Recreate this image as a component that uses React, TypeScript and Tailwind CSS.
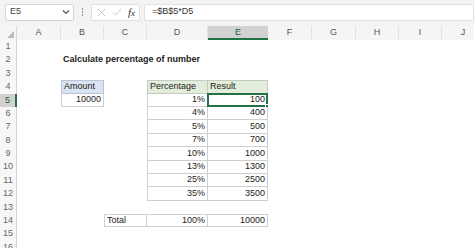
const cols = [
  { key: "A", w: "w-[44px]" },
  { key: "B", w: "w-[43px]" },
  { key: "C", w: "w-[43px]" },
  { key: "D", w: "w-[61px]" },
  { key: "E", w: "w-[60px]" },
  { key: "F", w: "w-[44px]" },
  { key: "G", w: "w-[44px]" },
  { key: "H", w: "w-[43px]" },
  { key: "I", w: "w-[43px]" },
  { key: "J", w: "w-[43px]" },
];

type Cell = { text?: string; align?: "l" | "r"; bold?: boolean; cls?: string; selected?: boolean };

// cells keyed by row -> column letter
const data: Record<number, Record<string, Cell>> = {
  2: { B: { text: "Calculate percentage of number", bold: true } },
  4: {
    B: { text: "Amount", cls: "bg-[#dae3f1] border border-[#b8c3d3]" },
    D: { text: "Percentage", cls: "bg-[#e2eedb] border border-[#c4ccc0]" },
    E: { text: "Result", cls: "bg-[#e2eedb] border-y border-r border-[#c4ccc0]" },
  },
  14: {
    C: { text: "Total", cls: "border border-[#cfcfcf]" },
    D: { text: "100%", align: "r", cls: "border-y border-r border-[#cfcfcf]" },
    E: { text: "10000", align: "r", cls: "border-y border-r border-[#cfcfcf]" },
  },
};

const pct = ["1%", "4%", "5%", "7%", "10%", "13%", "25%", "35%"];
const res = ["100", "400", "500", "700", "1000", "1300", "2500", "3500"];
pct.forEach((p, i) => {
  const r = 5 + i;
  data[r] = {
    ...(data[r] || {}),
    D: { text: p, align: "r", cls: "border-x border-b border-[#cfcfcf]" },
    E: { text: res[i], align: "r", cls: "border-r border-b border-[#cfcfcf]", selected: r === 5 },
  };
});
data[5].B = { text: "10000", align: "r", cls: "border-x border-b border-[#cfcfcf]" };

const rows = Array.from({ length: 16 }, (_, i) => i + 1);

export default function App() {
  return (
    <div className="w-[474px] h-[248px] overflow-hidden bg-white text-[9px] text-[#222] font-['Liberation_Sans',Arial,sans-serif]">
      {/* formula bar */}
      <div className="h-[26px] bg-[#f3f3f3] flex items-center gap-[4px] pl-[5px] pb-[2px]">
        <div className="w-[69px] h-[17px] bg-white border border-[#d6d6d6] rounded-[2px] flex items-center justify-between pl-[4px] pr-[3px] text-[#444]">
          <span>E5</span>
          <svg width="8" height="6" viewBox="0 0 8 6">
            <path d="M1 1.5 L4 4.5 L7 1.5" fill="none" stroke="#555" strokeWidth="1.2" />
          </svg>
        </div>
        <div className="w-[9px] flex flex-col items-center gap-[1.5px]">
          <span className="w-[1.5px] h-[1.5px] bg-[#999]" />
          <span className="w-[1.5px] h-[1.5px] bg-[#999]" />
          <span className="w-[1.5px] h-[1.5px] bg-[#999]" />
        </div>
        <div className="w-[49px] h-[17px] bg-white border border-[#e0e0e0] rounded-[2px] flex items-center pl-[5px] gap-[6px]">
          <svg width="9" height="9" viewBox="0 0 9 9">
            <path d="M1 1 L8 8 M8 1 L1 8" stroke="#c8c8c8" strokeWidth="1" />
          </svg>
          <svg width="10" height="8" viewBox="0 0 10 8">
            <path d="M1 4.5 L3.5 7 L9 1" fill="none" stroke="#c8c8c8" strokeWidth="1" />
          </svg>
          <span className="font-['Liberation_Serif',serif] italic text-[11px] text-[#333] leading-none">
            f<span className="text-[9px]">x</span>
          </span>
        </div>
        <div className="flex-1 h-[17px] bg-white border border-[#e0e0e0] rounded-l-[2px] flex items-center pl-[7px] text-[#333]">
          =$B$5*D5
        </div>
      </div>

      {/* column headers */}
      <div className="flex h-[14px] bg-[#f5f5f5] text-[#555]">
        <div className="w-[17px] shrink-0 relative border-r border-[#dadada]">
          <svg className="absolute right-[2px] bottom-[2px]" width="7" height="7" viewBox="0 0 7 7">
            <path d="M7 0 L7 7 L0 7 Z" fill="#bcbcbc" />
          </svg>
        </div>
        {cols.map((c) => (
          <div
            key={c.key}
            className={`${c.w} shrink-0 flex items-center justify-center ${
              c.key === "E"
                ? "bg-[#d2d2d2] border-b-2 border-[#217346] text-[#1d5e3a] pt-[2px]"
                : "border-r border-[#e2e2e2]"
            }`}
          >
            {c.key}
          </div>
        ))}
      </div>

      {/* rows */}
      {rows.map((r) => (
        <div key={r} className="flex h-[13.4px]">
          <div
            className={`w-[17px] shrink-0 flex items-center justify-center ${
              r === 5
                ? "bg-[#d2d2d2] text-[#1d5e3a] border-r-2 border-[#217346]"
                : "bg-[#f7f7f7] text-[#666] border-r border-[#d4d4d4]"
            }`}
          >
            {r}
          </div>
          {cols.map((c) => {
            const cell = data[r]?.[c.key];
            return (
              <div
                key={c.key}
                className={`${c.w} shrink-0 relative flex items-center whitespace-nowrap ${
                  cell?.align === "r" ? "justify-end pr-[2px]" : "pl-[2px]"
                } ${cell?.bold ? "font-bold" : ""} ${cell?.cls ?? ""}`}
              >
                {cell?.text}
                {cell?.selected && (
                  <div className="absolute -left-[1px] -top-[1px] -right-[1px] -bottom-[1px] border-2 border-[#217346]">
                    <div className="absolute -right-[3px] -bottom-[3px] w-[4px] h-[4px] bg-[#217346] border border-white" />
                  </div>
                )}
              </div>
            );
          })}
        </div>
      ))}
    </div>
  );
}
